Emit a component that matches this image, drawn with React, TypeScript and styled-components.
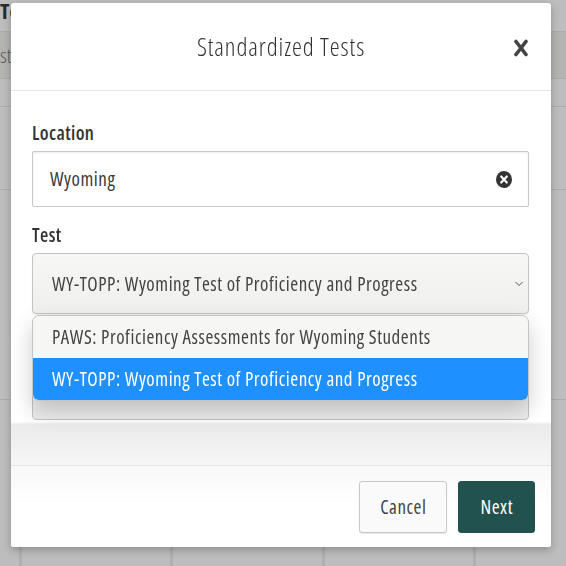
import React from "react";
import styled, { createGlobalStyle } from "styled-components";

const GlobalStyle = createGlobalStyle`
  html, body { margin: 0; padding: 0; }
  body {
    background: #bdbdbd;
    font-family: "Open Sans", "Liberation Sans", sans-serif;
    font-stretch: condensed;
    overflow: hidden;
  }
  * { box-sizing: border-box; }
`;

const Page = styled.div`
  width: 566px;
  height: 566px;
  background: #bdbdbd;
  display: grid;
  grid-template-rows: 32px 47px 28px 83px 210px 1fr;
`;

const BgRow = styled.div<{ $shade?: string }>`
  border-bottom: 1px solid #adadad;
  background: ${(p) => p.$shade || "transparent"};
  display: flex;
  align-items: center;
  overflow: hidden;
`;

const BgTitle = styled.div`
  font-size: 22px;
  font-weight: 700;
  color: #2a2a2a;
  margin-top: -12px;
`;

const BgCellText = styled.div`
  font-size: 21px;
  font-weight: 300;
  color: #5a5a5a;
`;

const BgColumns = styled.div`
  display: grid;
  grid-template-columns: 22px 151px 152px 151px 1fr;
  & > div { border-right: 3px solid #b0b0b0; }
  & > div:last-child { border-right: none; }
`;

const Overlay = styled.div`
  position: fixed;
  inset: 0;
  padding: 3px 0 0 11px;
  display: flex;
  align-items: flex-start;
`;

const Modal = styled.div`
  width: 540px;
  height: 544px;
  background: #fff;
  border-radius: 3px;
  box-shadow: 0 3px 8px rgba(0, 0, 0, 0.25);
  display: flex;
  flex-direction: column;
  overflow: hidden;
`;

const Header = styled.div`
  height: 88px;
  border-bottom: 1px solid #e5e5e5;
  display: flex;
  align-items: center;
  justify-content: center;
  position: relative;
`;

const Title = styled.h4`
  margin: 0;
  font-size: 25px;
  letter-spacing: 0.9px;
  font-weight: 300;
  color: #333;
  padding-bottom: 2px;
`;

const Close = styled.button`
  position: absolute;
  right: 23px;
  top: 36px;
  border: none;
  background: none;
  padding: 0;
  display: flex;
  cursor: pointer;
`;

const Body = styled.div`
  padding: 30px 22px 0 21px;
  flex: 1;
  display: flex;
  flex-direction: column;
  position: relative;
  background: linear-gradient(to bottom, #fff 0, #fff 331px, #ebebeb 333px, #f6f6f6 374px);
`;

const Label = styled.label`
  font-size: 19px;
  letter-spacing: 0.4px;
  font-weight: 600;
  color: #333;
  line-height: 24px;
  display: block;
  margin-bottom: 6px;
`;

const InputBox = styled.div`
  height: 56px;
  border: 1px solid #c8c8c8;
  border-radius: 2px;
  box-shadow: inset 0 1px 2px rgba(0, 0, 0, 0.08);
  display: flex;
  align-items: center;
  padding: 0 16px 0 17px;
  margin-bottom: 16px;
  background: #fff;
`;

const fieldText = `
  font-size: 19px;
  letter-spacing: 0.55px;
  font-weight: 400;
`;

const InputText = styled.span`
  flex: 1;
  ${fieldText}
  color: #3a3a3a;
`;

const SelectBox = styled.div`
  height: 61px;
  border: 1px solid #c4c4c4;
  border-radius: 4px;
  background: linear-gradient(to bottom, #f7f7f5, #efefed);
  display: flex;
  align-items: center;
  padding: 0 5px 0 19px;
  box-shadow: 0 1px 1px rgba(0, 0, 0, 0.08);
`;

const SelectText = styled.span`
  flex: 1;
  ${fieldText}
  color: #444;
`;

const Lower = styled.div`
  height: 60px;
  margin-top: 46px;
  border: 1px solid #c4c4c4;
  border-radius: 4px;
  background: linear-gradient(to bottom, #f3f3f3, #ececec);
`;

const Menu = styled.ul`
  position: absolute;
  left: 21px;
  right: 22px;
  top: 224px;
  margin: 0;
  padding: 0;
  list-style: none;
  border: 1px solid #c4c4c4;
  border-radius: 7px;
  overflow: hidden;
  box-shadow: 0 10px 22px rgba(0, 0, 0, 0.2);
  background: #f6f6f4;
`;

const Option = styled.li<{ $active?: boolean }>`
  height: 42px;
  display: flex;
  align-items: center;
  padding-left: 19px;
  ${fieldText}
  color: ${(p) => (p.$active ? "#fff" : "#444")};
  background: ${(p) => (p.$active ? "#1e90ff" : "transparent")};
`;

const Footer = styled.div`
  height: 82px;
  border-top: 1px solid #e5e5e5;
  display: flex;
  justify-content: flex-end;
  align-items: flex-start;
  gap: 11px;
  padding: 15px 16px 0 0;
  background: linear-gradient(to bottom, #f8f8f8 0, #fff 40px);
`;

const Button = styled.button<{ $primary?: boolean }>`
  height: 52px;
  padding: 0 ${(p) => (p.$primary ? "21px" : "20px")};
  font-family: inherit;
  font-stretch: condensed;
  ${fieldText}
  border-radius: 3px;
  cursor: pointer;
  border: 1px solid ${(p) => (p.$primary ? "#22524f" : "#c8c8c8")};
  background: ${(p) => (p.$primary ? "#22524f" : "#fafafa")};
  color: ${(p) => (p.$primary ? "#fff" : "#444")};
  box-shadow: ${(p) => (p.$primary ? "none" : "0 1px 1px rgba(0,0,0,0.1)")};
`;

const CloseIcon = () => (
  <svg width="14" height="18" viewBox="0 0 14 18">
    <path d="M2 2.5 L12 15.5 M12 2.5 L2 15.5" stroke="#444" strokeWidth="3.6" strokeLinecap="round" />
  </svg>
);

const ClearIcon = () => (
  <svg width="16" height="17" viewBox="0 0 16 17">
    <ellipse cx="8" cy="8.5" rx="8" ry="8.5" fill="#333" />
    <path d="M5.2 5.5 L10.8 11.5 M10.8 5.5 L5.2 11.5" stroke="#fff" strokeWidth="2.2" strokeLinecap="round" />
  </svg>
);

const Chevron = () => (
  <svg width="8" height="6" viewBox="0 0 8 6">
    <path d="M0.5 1 L4 4.5 L7.5 1" stroke="#555" strokeWidth="1" fill="none" />
  </svg>
);

export default function App() {
  return (
    <>
      <GlobalStyle />
      <Page>
        <BgRow>
          <BgTitle>Te</BgTitle>
        </BgRow>
        <BgRow $shade="#b4b4b2">
          <BgCellText>st</BgCellText>
        </BgRow>
        <BgRow />
        <BgRow />
        <BgRow />
        <BgColumns>
          <div />
          <div />
          <div />
          <div />
          <div />
        </BgColumns>
      </Page>
      <Overlay>
        <Modal>
          <Header>
            <Title>Standardized Tests</Title>
            <Close aria-label="Close">
              <CloseIcon />
            </Close>
          </Header>
          <Body>
            <Label>Location</Label>
            <InputBox>
              <InputText>Wyoming</InputText>
              <ClearIcon />
            </InputBox>
            <Label>Test</Label>
            <SelectBox>
              <SelectText>WY-TOPP: Wyoming Test of Proficiency and Progress</SelectText>
              <Chevron />
            </SelectBox>
            <Lower />
            <Menu>
              <Option>PAWS: Proficiency Assessments for Wyoming Students</Option>
              <Option $active>WY-TOPP: Wyoming Test of Proficiency and Progress</Option>
            </Menu>
          </Body>
          <Footer>
            <Button>Cancel</Button>
            <Button $primary>Next</Button>
          </Footer>
        </Modal>
      </Overlay>
    </>
  );
}
